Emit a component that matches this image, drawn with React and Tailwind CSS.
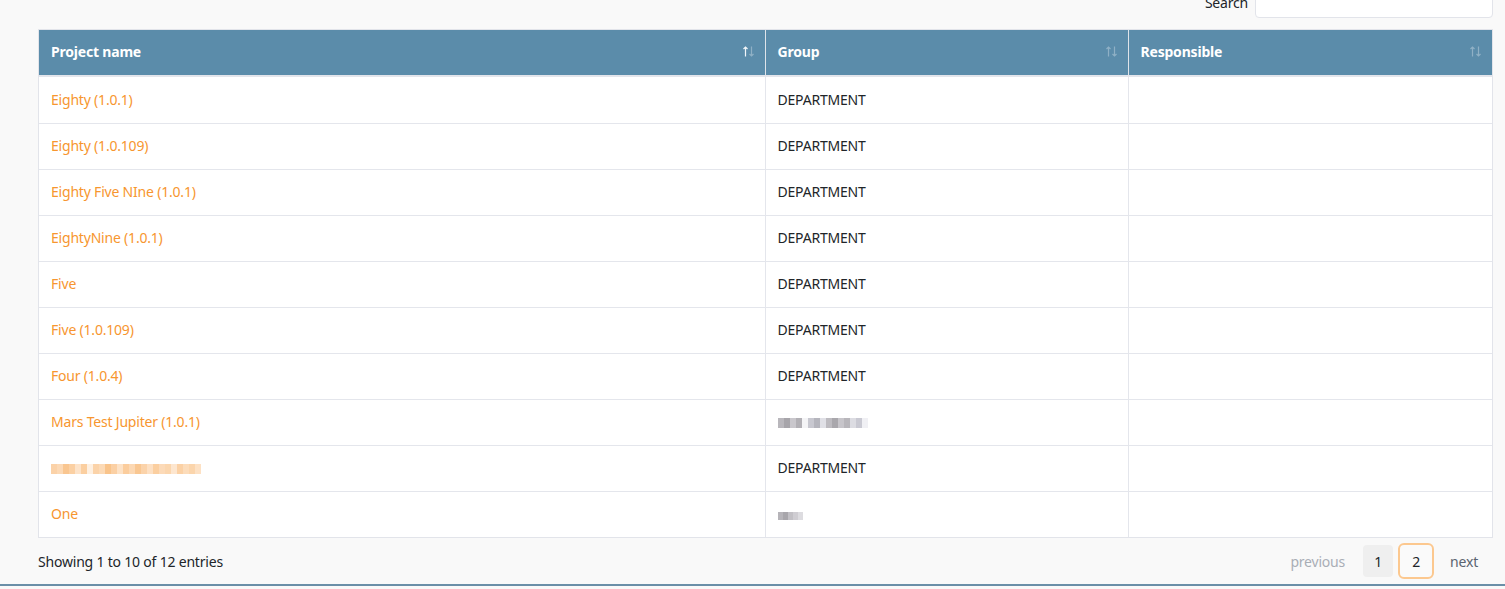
import React from "react";

const rows = [
  { name: "Eighty (1.0.1)", group: "DEPARTMENT" },
  { name: "Eighty (1.0.109)", group: "DEPARTMENT" },
  { name: "Eighty Five NIne (1.0.1)", group: "DEPARTMENT" },
  { name: "EightyNine (1.0.1)", group: "DEPARTMENT" },
  { name: "Five", group: "DEPARTMENT" },
  { name: "Five (1.0.109)", group: "DEPARTMENT" },
  { name: "Four (1.0.4)", group: "DEPARTMENT" },
  { name: "Mars Test Jupiter (1.0.1)", group: "BLUR1" },
  { name: "BLURNAME", group: "DEPARTMENT" },
  { name: "One", group: "BLUR2" },
];

const nameBlur = ["#fbd2a8","#fcd9b5","#f9c690","#fbd0a3","#fde3c9","#fbcfa0","#fef0e1","#fbd3a9","#fcdab6","#f9c48b","#fbd0a4","#fde2c6","#fbcd9d","#fcd8b3","#f9c792","#fbd3aa","#fde0c3","#fbcfa0","#fcdab8","#fbd6ae","#fde6cf","#fbd1a5","#fcdcba","#fbd5ac","#fde1c4"];
const grpBlur1 = ["#b9b7bc","#a7a5aa","#c9c7cc","#b2b0b5","#f4f4f6","#c8c8d0","#b5b5bd","#e0e0e6","#bdbbc0","#a9a7ac","#c7c5ca","#b8b6bb","#dcdce2","#c9c9d2","#f0f0f4"];
const grpBlur2 = ["#b6b4b9","#a8a6ab","#c2c0c5","#cfcdd2","#dddce0"];

function Blur({ colors, h = "h-[10px]", w = "w-[6px]" }) {
  return (
    <span className="inline-flex items-center align-middle">
      {colors.map((c, i) => (
        <span key={i} className={`inline-block ${w} ${h}`} style={{ backgroundColor: c }} />
      ))}
    </span>
  );
}

function SortIcon({ active }) {
  const up = active ? "#f2f6f9" : "#8fb0c5";
  const down = "#8fb0c5";
  return (
    <svg width="11" height="11" viewBox="0 0 11 11" className="mr-[-1px] shrink-0">
      <path d="M2.5 10.5 V1 M0.5 3 L2.5 1 L4.5 3" stroke={up} strokeWidth="1.2" fill="none" />
      <path d="M8.5 0.5 V10 M6.5 8 L8.5 10 L10.5 8" stroke={down} strokeWidth="1.2" fill="none" />
    </svg>
  );
}

export default function App() {
  return (
    <div
      className="w-[1505px] h-[589px] overflow-hidden bg-[#f9f9f9] text-[14px] tracking-[-0.2px] text-[#212529]"
      style={{ fontFamily: '"Noto Sans", "Open Sans", sans-serif' }}
    >
      <div className="flex h-[586px] flex-col border-b-2 border-[#6a8fa8] px-[12px]">
        <div className="mt-[-14px] flex items-center justify-end gap-[7px]">
          <label className="text-[14px] text-[#212529]">Search</label>
          <div className="h-[32px] w-[238px] rounded-[4px] border border-[#e2e4ea] bg-white" />
        </div>
        <div className="mt-[11px] ml-[26px] w-[1455px] border border-[#e2e4ea] bg-white">
          <table className="w-full table-fixed border-collapse">
            <colgroup>
              <col className="w-[726px]" />
              <col className="w-[363px]" />
              <col />
            </colgroup>
            <thead>
              <tr className="h-[45px] bg-[#5b8caa] text-white">
                <th className="border-r border-[#dfe4ea] px-[12px] pb-[2px] text-left font-bold">
                  <div className="flex items-center justify-between">
                    <span>Project name</span>
                    <SortIcon active />
                  </div>
                </th>
                <th className="border-r border-[#dfe4ea] px-[12px] pb-[2px] text-left font-bold">
                  <div className="flex items-center justify-between">
                    <span>Group</span>
                    <SortIcon />
                  </div>
                </th>
                <th className="px-[12px] pb-[2px] text-left font-bold">
                  <div className="flex items-center justify-between">
                    <span>Responsible</span>
                    <SortIcon />
                  </div>
                </th>
              </tr>
              <tr className="h-[2px] bg-[#e3e5eb]">
                <td colSpan={3} className="p-0" />
              </tr>
            </thead>
            <tbody>
              {rows.map((r, i) => (
                <tr key={i} className={`h-[46px] ${i < rows.length - 1 ? "border-b border-[#e4e6ec]" : ""}`}>
                  <td className="border-r border-[#e4e6ec] px-[12px] pb-[1px] text-[#f7962f]">
                    {r.name === "BLURNAME" ? <Blur colors={nameBlur} /> : r.name}
                  </td>
                  <td className="border-r border-[#e4e6ec] px-[12px] pb-[1px]">
                    {r.group === "BLUR1" ? (
                      <Blur colors={grpBlur1} />
                    ) : r.group === "BLUR2" ? (
                      <Blur colors={grpBlur2} h="h-[8px]" w="w-[5px]" />
                    ) : (
                      r.group
                    )}
                  </td>
                  <td className="px-[12px]" />
                </tr>
              ))}
            </tbody>
          </table>
        </div>
        <div className="ml-[26px] mt-[5px] flex w-[1455px] items-center justify-between">
          <span>Showing 1 to 10 of 12 entries</span>
          <div className="flex items-center">
            <span className="mr-[18px] text-[#a9aeb6]">previous</span>
            <span className="flex h-[32px] w-[30px] items-center justify-center rounded-[4px] bg-[#efefef] text-[#212529]">1</span>
            <span className="ml-[5px] flex h-[36px] w-[36px] items-center justify-center rounded-[6px] border-2 border-[#fcc88f] bg-[#fafafa] text-[#212529]">2</span>
            <span className="ml-[16px] mr-[15px] text-[#5b6470]">next</span>
          </div>
        </div>
      </div>
    </div>
  );
}
